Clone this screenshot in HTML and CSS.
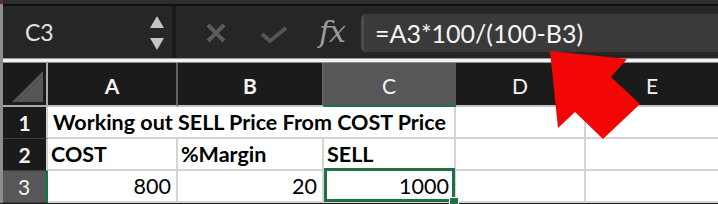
FILE: index.html
```html
<!DOCTYPE html>
<html>
<head>
<meta charset="utf-8">
<link rel="stylesheet" href="styles.css">
</head>
<body>
<div class="topbar"><span class="purple"></span></div>
<div class="page">
  <div class="strip"></div>
  <div class="main">
    <div class="fbar">
      <div class="namebox">
        <span class="ref">C3</span>
        <span class="spin">
          <svg width="14" height="12" viewBox="0 0 14 12"><polygon points="7,0 14,12 0,12" fill="#c4c4c4"/></svg>
          <svg width="14" height="12" viewBox="0 0 14 12"><polygon points="0,0 14,0 7,12" fill="#c4c4c4"/></svg>
        </span>
      </div>
      <div class="fdiv"></div>
      <div class="actions">
        <svg class="ic-x" width="22" height="20" viewBox="0 0 22 20"><path d="M3 2 L19 18 M19 2 L3 18" stroke="#5a5a5a" stroke-width="4" fill="none"/></svg>
        <svg class="ic-ok" width="28" height="18" viewBox="0 0 28 18"><path d="M2 8 L10 15 L26 2" stroke="#555" stroke-width="4" fill="none"/></svg>
        <span class="fx">fx</span>
      </div>
      <div class="finput">=A3*100/(100-B3)</div>
    </div>
    <div class="sep"></div>
    <div class="grid">
      <div class="corner"><svg width="31" height="31" viewBox="0 0 31 31"><polygon points="31,0 31,31 0,31" fill="#555"/></svg></div>
      <div class="ch bold">A</div>
      <div class="ch bold">B</div>
      <div class="ch sel">C</div>
      <div class="ch">D</div>
      <div class="ch last">E</div>

      <div class="rh">1</div>
      <div class="cell title span3">Working out SELL Price From COST Price</div>
      <div class="cell"></div>
      <div class="cell last"></div>

      <div class="rh">2</div>
      <div class="cell b">COST</div>
      <div class="cell b">%Margin</div>
      <div class="cell b">SELL</div>
      <div class="cell"></div>
      <div class="cell last"></div>

      <div class="rh rsel">3</div>
      <div class="cell num">800</div>
      <div class="cell num">20</div>
      <div class="cell num active">1000</div>
      <div class="cell"></div>
      <div class="cell last"></div>
    </div>
  </div>
</div>
<svg class="arrow" width="718" height="204" viewBox="0 0 718 204">
  <polygon points="550,51 627,59 611,77 640,104 603,139 575,112 558,128" fill="#f20606"/>
</svg>
</body>
</html>
```

FILE: styles.css
```css
html, body {
  margin: 0;
  padding: 0;
}
body {
  width: 718px;
  height: 204px;
  overflow: hidden;
  background: #1b1b1b;
  font-family: "Lato", "Liberation Sans", sans-serif;
  position: relative;
}
.topbar {
  height: 4px;
  background: #2d2d2d;
  display: flex;
}
.purple {
  width: 3px;
  height: 4px;
  background: #5a2a55;
}
.page {
  display: flex;
}
.strip {
  width: 3px;
  background: #8e8e8e;
  flex: none;
}
.main {
  flex: 1;
  display: flex;
  flex-direction: column;
}
.fbar {
  height: 52px;
  border-top: 2px solid #0f0f0f;
  background: #262626;
  display: flex;
  align-items: stretch;
}
.namebox {
  width: 169px;
  display: flex;
  align-items: center;
  padding-left: 22px;
  box-sizing: border-box;
}
.ref {
  color: #e2e2e2;
  font-size: 23px;
}
.spin {
  margin-left: auto;
  margin-right: 8px;
  display: flex;
  flex-direction: column;
  gap: 10px;
  padding-top: 2px;
}
.spin svg { display: block; }
.fdiv {
  width: 4px;
  background: #1a1a1a;
}
.actions {
  width: 185px;
  display: flex;
  align-items: center;
  padding-left: 29px;
  box-sizing: border-box;
}
.ic-x { margin-top: 1px; }
.ic-ok { margin-left: 33px; margin-top: 6px; }
.fx {
  margin-left: 31px;
  font-family: "DejaVu Serif", "Liberation Serif", serif;
  font-style: italic;
  font-size: 30px;
  color: #9c9c9c;
  margin-top: -2px;
  letter-spacing: -1px;
}
.finput {
  flex: 1;
  margin: 8px 0 6px 0;
  background: #3a3a3a;
  border-radius: 5px 0 0 5px;
  border-left: 3px solid #4a4a4a;
  color: #f4f4f4;
  font-size: 25px;
  display: flex;
  align-items: center;
  padding-left: 11px;
}
.sep {
  height: 5px;
  background: linear-gradient(#9a9a9a 0 1px, #f2f2f2 1px 4px, #8c8c8c 4px);
}
.grid {
  display: grid;
  grid-template-columns: 45px 130px 146px 132px 130px 1fr;
  grid-template-rows: 44px 32px 32px 32px;
}
.grid > div {
  box-sizing: border-box;
  display: flex;
  align-items: center;
}
.corner {
  background: #1b1b1b;
  border-right: 2px solid #ababab;
  border-bottom: 2px solid #ababab;
  justify-content: flex-end;
  align-items: flex-end !important;
  padding: 0 3px 3px 0;
}
.corner svg { display: block; }
.ch {
  background: #1b1b1b;
  border-right: 2px solid #626262;
  border-bottom: 2px solid #c4c4c4;
  justify-content: center;
  color: #f4f4f4;
  font-size: 21px;
  padding-top: 2px;
}
.ch.bold { font-weight: 700; }
.ch.sel {
  background: #575757;
  border-right-color: #575757;
  border-bottom: 2px solid #1e7145;
  font-weight: 400;
}
.ch.last { border-right: none; }
.rh {
  background: #1b1b1b;
  border-right: 2px solid #cfcfcf;
  border-bottom: 1px solid #3c3c3c;
  justify-content: center;
  color: #f4f4f4;
  font-weight: 700;
  font-size: 21px;
}
.rh.rsel {
  background: #575757;
  border-right: 3px solid #1e7145;
  font-weight: 400;
}
.cell {
  background: #fff;
  border-right: 2px solid #d4d4d4;
  border-bottom: 2px solid #d4d4d4;
  font-size: 21.5px;
  color: #000;
  padding: 0 5px 0 3px;
  white-space: nowrap;
  position: relative;
}
.cell.last { border-right: none; }
.span3 { grid-column: span 3; }
.title, .b { font-weight: 700; }
.title { padding-left: 5px; }
.num { justify-content: flex-end; }
.active::after {
  content: "";
  position: absolute;
  left: 0;
  top: -3px;
  right: -1px;
  bottom: -1px;
  border: 3px solid #1e7145;
}
.active::before {
  content: "";
  position: absolute;
  left: 125px;
  top: 26px;
  width: 8px;
  height: 6px;
  background: #1e7145;
  border: 1px solid #fff;
  z-index: 2;
}
.arrow {
  position: absolute;
  left: 0;
  top: 0;
  pointer-events: none;
}
```
